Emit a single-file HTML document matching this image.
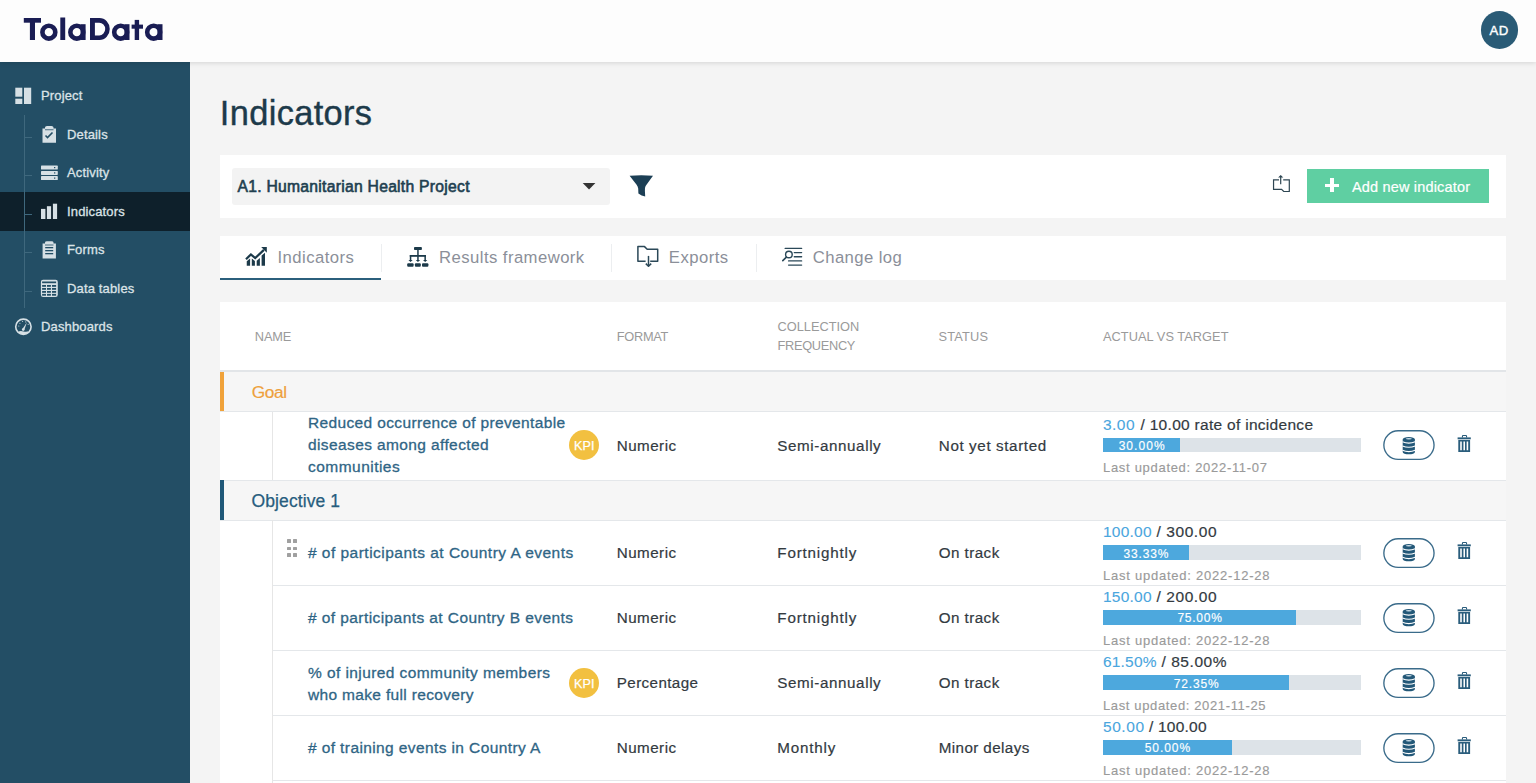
<!DOCTYPE html>
<html><head><meta charset="utf-8">
<style>
*{box-sizing:border-box;margin:0;padding:0}
html,body{width:1536px;height:783px;overflow:hidden}
body{background:#f4f4f4;font-family:"Liberation Sans",sans-serif;position:relative}
.abs{position:absolute}
#hdr{position:absolute;left:0;top:0;width:1536px;height:62px;background:#fdfdfd;box-shadow:0 1px 5px rgba(0,0,0,.13);z-index:5}
#side{position:absolute;left:0;top:62px;width:190px;height:721px;background:#234e65;z-index:4}
.nav{position:absolute;color:#dbe3e7;font-size:13px;white-space:nowrap;line-height:1;letter-spacing:0.15px;-webkit-text-stroke:0.3px #dbe3e7}
.vline{position:absolute;left:24px;top:116px;width:1px;height:190px;background:#3f687d}
.tick{position:absolute;left:24px;width:8px;height:1px;background:#3f687d}
.card{position:absolute;background:#fff}
.t{position:absolute;white-space:pre;line-height:1}
#main{position:absolute;left:0;top:0;width:1536px;height:783px}
</style></head><body>
<div id="hdr">
  <svg class="abs" style="left:0;top:0" width="180" height="62" viewBox="0 0 180 62">
    <g fill="#1a1d54">
      <rect x="23.8" y="18" width="17.2" height="4.7"/>
      <rect x="29.9" y="18" width="5.1" height="22"/>
      <circle cx="48.85" cy="32.15" r="6.45" fill="none" stroke="#1a1d54" stroke-width="4.6"/>
      <rect x="60.3" y="17.5" width="4.9" height="22.5"/>
      <circle cx="76.8" cy="32.15" r="6.45" fill="none" stroke="#1a1d54" stroke-width="4.6"/>
      <rect x="80.6" y="24.2" width="5" height="15.8"/>
      <path d="M90 18 H99.5 A10.25 11 0 0 1 99.5 40 H90 Z M94.9 22.7 V35.4 H99.2 A6 6.35 0 0 0 99.2 22.7 Z" fill-rule="evenodd"/>
      <circle cx="120.65" cy="32.15" r="6.45" fill="none" stroke="#1a1d54" stroke-width="4.6"/>
      <rect x="124.5" y="24.2" width="5" height="15.8"/>
      <rect x="134.7" y="19.9" width="4.4" height="20.1"/>
      <rect x="131.6" y="24.6" width="11.4" height="4.1"/>
      <circle cx="153.65" cy="32.15" r="6.45" fill="none" stroke="#1a1d54" stroke-width="4.6"/>
      <rect x="157.5" y="24.2" width="5" height="15.8"/>
    </g>
  </svg>
  <div class="abs" style="left:1480.5px;top:11px;width:37.5px;height:37.5px;border-radius:50%;background:#2a5b76"></div><div class="abs" style="left:1489.6px;top:24px;font-size:13.2px;line-height:1;color:#fff;letter-spacing:0.3px;-webkit-text-stroke:0.4px #fff">AD</div>
</div>

<div id="side">
  <div class="abs" style="left:0;top:130px;width:190px;height:38.5px;background:#0e202b"></div>
  <div class="vline" style="top:53px;height:193px"></div>
  <div class="tick" style="top:75px"></div>
  <div class="tick" style="top:113px"></div>
  <div class="tick" style="top:152px"></div>
  <div class="tick" style="top:190px"></div>
  <div class="tick" style="top:229px"></div>
  <svg class="abs" style="left:0;top:0" width="190" height="300" viewBox="0 62 190 300">
    <g fill="#d6e0e5">
      <!-- project -->
      <rect x="15.3" y="87.7" width="7" height="9"/>
      <rect x="15.3" y="98.7" width="7" height="5.3"/>
      <rect x="24" y="87.7" width="7.2" height="16.3"/>
      <!-- details clipboard -->
      <path d="M42.5 128.5 H45 V127.5 Q45 126 47 126 H51.5 Q53.5 126 53.5 127.5 V128.5 H56 V142.8 H42.5 Z"/>
      <path d="M45.5 135.5 L47.5 137.5 L52.5 132.5" stroke="#234e65" stroke-width="1.6" fill="none"/><rect x="45" y="129.4" width="8.5" height="0.8" fill="#234e65"/>
      <!-- activity -->
      <rect x="41" y="165.6" width="16.8" height="4" rx="0.6"/>
      <rect x="41" y="170.9" width="16.8" height="4" rx="0.6"/>
      <rect x="41" y="176.1" width="16.8" height="4" rx="0.6"/>
      <rect x="54" y="167" width="1.3" height="1.2" fill="#234e65"/>
      <rect x="54" y="172.3" width="1.3" height="1.2" fill="#234e65"/>
      <rect x="54" y="177.5" width="1.3" height="1.2" fill="#234e65"/>
      <!-- indicators bars -->
      <rect x="41" y="208.9" width="4.4" height="10.1"/>
      <rect x="46.9" y="206.2" width="4.2" height="12.8"/>
      <rect x="52.9" y="203.7" width="4.2" height="15.3"/>
      <!-- forms clipboard -->
      <path d="M42.6 243.5 H45 V242.5 Q45 241.3 47 241.3 H51.5 Q53.5 241.3 53.5 242.5 V243.5 H55.9 V258.6 H42.6 Z"/>
      <rect x="45" y="244.6" width="8.5" height="0.8" fill="#234e65"/><rect x="45.2" y="247" width="8" height="1.3" fill="#234e65"/>
      <rect x="45.2" y="250" width="8" height="1.3" fill="#234e65"/>
      <rect x="45.2" y="253" width="8" height="1.3" fill="#234e65"/>
      <!-- data tables -->
      <rect x="40.9" y="279.8" width="16.9" height="17.1" rx="2.2"/>
      <rect x="42.1" y="281.5" width="14" height="1.7" fill="#234e65"/>
      <rect x="42.1" y="285.0" width="3.9" height="1.8" fill="#234e65"/><rect x="47.0" y="285.0" width="3.9" height="1.8" fill="#234e65"/><rect x="52.0" y="285.0" width="4.1" height="1.8" fill="#234e65"/><rect x="42.1" y="288.0" width="3.9" height="1.8" fill="#234e65"/><rect x="47.0" y="288.0" width="3.9" height="1.8" fill="#234e65"/><rect x="52.0" y="288.0" width="4.1" height="1.8" fill="#234e65"/><rect x="42.1" y="291.0" width="3.9" height="1.8" fill="#234e65"/><rect x="47.0" y="291.0" width="3.9" height="1.8" fill="#234e65"/><rect x="52.0" y="291.0" width="4.1" height="1.8" fill="#234e65"/><rect x="42.1" y="293.9" width="3.9" height="1.8" fill="#234e65"/><rect x="47.0" y="293.9" width="3.9" height="1.8" fill="#234e65"/><rect x="52.0" y="293.9" width="4.1" height="1.8" fill="#234e65"/>
      <!-- dashboards gauge -->
      <circle cx="23.4" cy="326.8" r="7.7" fill="none" stroke="#d6e0e5" stroke-width="1.6"/>
      <path d="M22.2 329.3 L26.8 322.4 L24.2 330.2 Z"/>
      <circle cx="23.2" cy="329.6" r="1.3"/>
      <path d="M18.2 331.6 Q20.5 330.6 23.4 331.4 Q26.3 332.2 28.6 331.3 L28 333.2 Q23.4 335.4 18.8 333.2 Z"/>
      <circle cx="18.8" cy="326" r="0.55"/><circle cx="19.9" cy="323.2" r="0.55"/><circle cx="22.6" cy="321.5" r="0.55"/><circle cx="25.8" cy="321.9" r="0.55"/><circle cx="28.2" cy="324.3" r="0.55"/>
    </g>
  </svg>
  <div class="nav" style="left:41px;top:27.2px">Project</div>
  <div class="nav" style="left:67px;top:65.7px">Details</div>
  <div class="nav" style="left:67px;top:104.2px">Activity</div>
  <div class="nav" style="left:67px;top:142.7px">Indicators</div>
  <div class="nav" style="left:67px;top:181.2px">Forms</div>
  <div class="nav" style="left:67px;top:219.7px">Data tables</div>
  <div class="nav" style="left:41px;top:258.2px">Dashboards</div>
</div>


<div id="main"><div class="t" style="left:219.80px;top:96.00px;font-size:34.4px;color:#1d3a4a;letter-spacing:0.351px;-webkit-text-stroke:0.4px #1d3a4a;">Indicators</div><div class="t" style="left:220px;top:154.5px;width:1286px;height:63.5px;background:#fff;"></div><div class="t" style="left:232px;top:167.6px;width:378px;height:37.3px;background:#f3f3f3;border-radius:3px;"></div><div class="t" style="left:237.50px;top:179.00px;font-size:15.7px;color:#213f50;letter-spacing:0.264px;-webkit-text-stroke:0.6px #213f50;">A1. Humanitarian Health Project</div><svg class="t" style="left:580px;top:180px" width="20" height="12"><path d="M2.7 3 H15.4 L9.05 9.5 Z" fill="#333"/></svg><svg class="t" style="left:626px;top:172px" width="32" height="28" viewBox="626 172 32 28"><path d="M629.6 175.8 Q641.3 174.8 653 175.8 L645.6 186 Q644.6 188 644.9 191 L645.2 196.6 Q641.5 195.8 638.4 193.5 L638.2 188.5 Q637.8 186.5 636.6 184.8 Z" fill="#1c3f55"/></svg><svg class="t" style="left:1266px;top:166px" width="30" height="30" viewBox="0 0 30 30"><g fill="none" stroke="#2e4653" stroke-width="1.2"><path d="M13 13.8 H7.55 V23.4 H15.6 L17.7 25.5 H23.3 V13.8 H17.2"/><path d="M14.7 18.2 V10"/></g><path d="M12.1 11.6 L14.7 9 L17.3 11.6 Z" fill="#2e4653"/></svg><div class="t" style="left:1307px;top:169.2px;width:182px;height:34px;background:#5fcfa2;"></div><div class="t" style="left:1330.3px;top:178.2px;width:3.4px;height:13.8px;background:#fff;"></div><div class="t" style="left:1325px;top:184px;width:14px;height:2.8px;background:#fff;"></div><div class="t" style="left:1352.00px;top:180.00px;font-size:14.5px;color:#fff;letter-spacing:0.171px;-webkit-text-stroke:0.2px #fff;">Add new indicator</div><div class="t" style="left:220px;top:236px;width:1286px;height:44px;background:#fff;"></div><div class="t" style="left:220px;top:277.8px;width:161px;height:2.5px;background:#2b5f7c;"></div><div class="t" style="left:381px;top:244px;width:1px;height:28px;background:#eceef0;"></div><div class="t" style="left:611px;top:244px;width:1px;height:28px;background:#eceef0;"></div><div class="t" style="left:755.5px;top:244px;width:1px;height:28px;background:#eceef0;"></div><div class="t" style="left:277.50px;top:250.00px;font-size:16.7px;color:#8b8f99;letter-spacing:0.433px;">Indicators</div><div class="t" style="left:439.10px;top:250.00px;font-size:16.7px;color:#8b8f99;letter-spacing:0.433px;">Results framework</div><div class="t" style="left:668.80px;top:250.00px;font-size:16.7px;color:#8b8f99;letter-spacing:0.464px;">Exports</div><div class="t" style="left:812.80px;top:250.00px;font-size:16.7px;color:#8b8f99;letter-spacing:0.397px;">Change log</div><svg class="t" style="left:242px;top:244px" width="30" height="24" viewBox="0 0 30 24"><g fill="#1c3a4a">
<path d="M4 15.3 L8.9 10.4 L13.2 14.1 L21.9 5.9" stroke="#1c3a4a" stroke-width="2.2" fill="none" stroke-linejoin="miter"/>
<path d="M19.2 3.1 H24.8 V8.7 Z"/>
<path d="M4.75 17.3 L8.1 14.6 V21.8 H4.75 Z"/>
<path d="M9.8 14.4 L12.9 17 V21.8 H9.8 Z"/>
<path d="M14.7 16.8 L17.9 14 V21.8 H14.7 Z"/>
<path d="M19.6 11.5 L23 8.8 V21.8 H19.6 Z"/>
</g></svg><svg class="t" style="left:402px;top:244px" width="30" height="24" viewBox="0 0 30 24"><g fill="#1c3a4a">
<rect x="12" y="3.1" width="7.9" height="3" rx="0.8"/>
<rect x="15.2" y="6" width="1.5" height="10.5"/>
<rect x="7.8" y="11" width="16.1" height="1.8"/>
<rect x="7.8" y="11" width="1.5" height="5.5"/>
<rect x="22.4" y="11" width="1.5" height="5.5"/>
<path d="M6.4 15.9 H10.7 L8.55 17.9 Z M13.8 15.9 H18.1 L15.95 17.9 Z M21 15.9 H25.3 L23.15 17.9 Z"/>
<rect x="5.2" y="19.2" width="6.4" height="3.5" rx="1"/>
<rect x="12.9" y="19.2" width="5.9" height="3.5" rx="1"/>
<rect x="20" y="19.2" width="6.4" height="3.5" rx="1"/>
</g></svg><svg class="t" style="left:632px;top:242px" width="30" height="28" viewBox="0 0 30 28"><g fill="none" stroke="#2b4858" stroke-width="1.5" stroke-linejoin="round">
<path d="M13.6 19.3 H5.9 V4.6 H12.5 L15.2 7.3 H25.7 V19.3 H18.2"/>
<path d="M16.5 13.9 V24.2"/>
<path d="M13.8 21.6 L16.5 24.3 L19.2 21.6"/>
</g></svg><svg class="t" style="left:778px;top:242px" width="30" height="28" viewBox="0 0 30 28"><g fill="none" stroke="#2b4858" stroke-width="1.4" stroke-linecap="round">
<path d="M7.2 6.4 H23.6 M16.3 10.6 H23.6 M16.3 14.7 H23.6 M10.6 18.9 H23.6 M10.6 23.1 H23.6"/>
<circle cx="10.9" cy="12.5" r="3.3"/>
<path d="M8.4 15.1 L4.8 18.6" stroke-width="1.6"/>
</g></svg><div class="t" style="left:220px;top:302px;width:1286px;height:481px;background:#fff;"></div><div class="t" style="left:254.80px;top:331.00px;font-size:12.8px;color:#9a9a9a;letter-spacing:-0.161px;">NAME</div><div class="t" style="left:616.80px;top:331.00px;font-size:12.8px;color:#9a9a9a;letter-spacing:-0.298px;">FORMAT</div><div class="t" style="left:777.60px;top:321.00px;font-size:12.8px;color:#9a9a9a;letter-spacing:-0.022px;">COLLECTION</div><div class="t" style="left:777.60px;top:340.00px;font-size:12.8px;color:#9a9a9a;letter-spacing:-0.321px;">FREQUENCY</div><div class="t" style="left:938.50px;top:331.00px;font-size:12.8px;color:#9a9a9a;letter-spacing:0.181px;">STATUS</div><div class="t" style="left:1103.00px;top:331.00px;font-size:12.8px;color:#9a9a9a;letter-spacing:0.037px;">ACTUAL VS TARGET</div><div class="t" style="left:220px;top:369.5px;width:1286px;height:2px;background:#e2e5e8;"></div><div class="t" style="left:220px;top:371.5px;width:1286px;height:39.5px;background:#f6f6f6;"></div><div class="t" style="left:220px;top:371.5px;width:4px;height:39.5px;background:#f0a23a;"></div><div class="t" style="left:251.80px;top:384.00px;font-size:17.3px;color:#eea03c;letter-spacing:-0.381px;-webkit-text-stroke:0.2px #eea03c;">Goal</div><div class="t" style="left:220px;top:411px;width:1286px;height:1px;background:#e4e7ea;"></div><div class="t" style="left:272.3px;top:412px;width:1px;height:68px;background:#e6e6e6;"></div><div class="t" style="left:220px;top:480px;width:1286px;height:1px;background:#e4e7ea;"></div><div class="t" style="left:220px;top:481px;width:1286px;height:39px;background:#f6f6f6;"></div><div class="t" style="left:220px;top:480.3px;width:4px;height:40px;background:#1f5878;"></div><div class="t" style="left:251.50px;top:493.00px;font-size:17.5px;color:#275d7e;letter-spacing:0.106px;-webkit-text-stroke:0.25px #275d7e;">Objective 1</div><div class="t" style="left:220px;top:519.5px;width:1286px;height:1px;background:#e4e7ea;"></div><div class="t" style="left:272.3px;top:520px;width:1px;height:263px;background:#e6e6e6;"></div><div class="t" style="left:308.00px;top:415.00px;font-size:15.5px;color:#2f6585;letter-spacing:0.360px;-webkit-text-stroke:0.3px #2f6585;">Reduced occurrence of preventable</div><div class="t" style="left:308.00px;top:437.00px;font-size:15.5px;color:#2f6585;letter-spacing:0.388px;-webkit-text-stroke:0.3px #2f6585;">diseases among affected</div><div class="t" style="left:308.00px;top:459.00px;font-size:15.5px;color:#2f6585;letter-spacing:0.470px;-webkit-text-stroke:0.3px #2f6585;">communities</div><div class="t" style="left:569.2px;top:430.4px;width:30px;height:30px;border-radius:50%;background:#f2c040"></div><div class="t" style="left:574.00px;top:440.00px;font-size:12.6px;color:#fff;letter-spacing:0.145px;-webkit-text-stroke:0.25px #fff;">KPI</div><div class="t" style="left:616.80px;top:438.00px;font-size:15.2px;color:#333a3f;letter-spacing:0.452px;-webkit-text-stroke:0.2px #333a3f;">Numeric</div><div class="t" style="left:777.30px;top:438.00px;font-size:15.2px;color:#333a3f;letter-spacing:0.598px;-webkit-text-stroke:0.2px #333a3f;">Semi-annually</div><div class="t" style="left:938.80px;top:438.00px;font-size:15.2px;color:#333a3f;letter-spacing:0.618px;-webkit-text-stroke:0.2px #333a3f;">Not yet started</div><div class="t" style="left:1103.00px;top:417.00px;font-size:15.5px;color:#4aa6de;letter-spacing:0.444px;-webkit-text-stroke:0.1px #4aa6de;">3.00</div><div class="t" style="left:1140.50px;top:417.00px;font-size:15.5px;color:#333a3f;letter-spacing:0.294px;-webkit-text-stroke:0.2px #333a3f;">/ 10.00 rate of incidence</div><div class="t" style="left:1103px;top:437.7px;width:257.7px;height:14.6px;background:#dde3e8;"></div><div class="t" style="left:1103px;top:437.7px;width:77.3px;height:14.6px;background:#4da8dd;"></div><div class="t" style="left:1118.65px;top:440.00px;font-size:12px;color:#fff;letter-spacing:1.060px;-webkit-text-stroke:0.15px #fff;">30.00%</div><div class="t" style="left:1103.00px;top:461.00px;font-size:13px;color:#9a9a9a;letter-spacing:0.698px;-webkit-text-stroke:0.15px #9a9a9a;">Last updated: 2022-11-07</div><svg class="t" style="left:1382px;top:429.3px" width="54" height="33"><rect x="1.85" y="1.75" width="50.2" height="28.6" rx="14.3" fill="none" stroke="#3a6b8a" stroke-width="1.35"/></svg><svg class="t" style="left:1400px;top:436.55px" width="18" height="19" viewBox="0 0 18 19">
<path d="M2.7 2.3 A6.1 2.3 0 0 1 14.9 2.3 V15 A6.1 2.3 0 0 1 2.7 15 Z" fill="#235878"/>
<g fill="none" stroke="#fff" stroke-width="1.1"><path d="M2.4 4.8 Q8.8 7.4 15.2 4.8"/><path d="M2.4 9.0 Q8.8 11.6 15.2 9.0"/><path d="M2.4 13.3 Q8.8 15.9 15.2 13.3"/></g>
<ellipse cx="8.8" cy="1.75" rx="3" ry="0.75" fill="#c9dbe6"/></svg><svg class="t" style="left:1456px;top:433.4px" width="17" height="20" viewBox="0 0 17 20"><g fill="#2a5d7c">
<path d="M5.9 4.6 V3.2 Q5.9 2 7.1 2 H9.9 Q11.1 2 11.1 3.2 V4.6 H10 V3.1 H7 V4.6 Z"/>
<rect x="1.6" y="4.4" width="13.2" height="1.9"/>
<path d="M2.3 6.9 H14.1 V18.9 H2.3 Z M4.2 8.5 V17.2 H5.8 V8.5 Z M7.45 8.5 V17.2 H9 V8.5 Z M10.65 8.5 V17.2 H12.2 V8.5 Z" fill-rule="evenodd"/>
</g></svg><div class="t" style="left:308.00px;top:545.00px;font-size:15.5px;color:#2f6585;letter-spacing:0.474px;-webkit-text-stroke:0.3px #2f6585;"># of participants at Country A events</div><div class="t" style="left:616.80px;top:545.00px;font-size:15.2px;color:#333a3f;letter-spacing:0.452px;-webkit-text-stroke:0.2px #333a3f;">Numeric</div><div class="t" style="left:777.30px;top:545.00px;font-size:15.2px;color:#333a3f;letter-spacing:0.804px;-webkit-text-stroke:0.2px #333a3f;">Fortnightly</div><div class="t" style="left:938.80px;top:545.00px;font-size:15.2px;color:#333a3f;letter-spacing:0.437px;-webkit-text-stroke:0.2px #333a3f;">On track</div><div class="t" style="left:1103.00px;top:524.00px;font-size:15.5px;color:#4aa6de;letter-spacing:0.218px;-webkit-text-stroke:0.1px #4aa6de;">100.00</div><div class="t" style="left:1156.50px;top:524.00px;font-size:15.5px;color:#333a3f;letter-spacing:0.568px;-webkit-text-stroke:0.2px #333a3f;">/ 300.00</div><div class="t" style="left:1103px;top:545.2px;width:257.7px;height:14.6px;background:#dde3e8;"></div><div class="t" style="left:1103px;top:545.2px;width:85.9px;height:14.6px;background:#4da8dd;"></div><div class="t" style="left:1123.45px;top:548.00px;font-size:12px;color:#fff;letter-spacing:0.860px;-webkit-text-stroke:0.15px #fff;">33.33%</div><div class="t" style="left:1103.00px;top:569.00px;font-size:13px;color:#9a9a9a;letter-spacing:0.765px;-webkit-text-stroke:0.15px #9a9a9a;">Last updated: 2022-12-28</div><svg class="t" style="left:1382px;top:536.75px" width="54" height="33"><rect x="1.85" y="1.75" width="50.2" height="28.6" rx="14.3" fill="none" stroke="#3a6b8a" stroke-width="1.35"/></svg><svg class="t" style="left:1400px;top:544.0px" width="18" height="19" viewBox="0 0 18 19">
<path d="M2.7 2.3 A6.1 2.3 0 0 1 14.9 2.3 V15 A6.1 2.3 0 0 1 2.7 15 Z" fill="#235878"/>
<g fill="none" stroke="#fff" stroke-width="1.1"><path d="M2.4 4.8 Q8.8 7.4 15.2 4.8"/><path d="M2.4 9.0 Q8.8 11.6 15.2 9.0"/><path d="M2.4 13.3 Q8.8 15.9 15.2 13.3"/></g>
<ellipse cx="8.8" cy="1.75" rx="3" ry="0.75" fill="#c9dbe6"/></svg><svg class="t" style="left:1456px;top:540.2px" width="17" height="20" viewBox="0 0 17 20"><g fill="#2a5d7c">
<path d="M5.9 4.6 V3.2 Q5.9 2 7.1 2 H9.9 Q11.1 2 11.1 3.2 V4.6 H10 V3.1 H7 V4.6 Z"/>
<rect x="1.6" y="4.4" width="13.2" height="1.9"/>
<path d="M2.3 6.9 H14.1 V18.9 H2.3 Z M4.2 8.5 V17.2 H5.8 V8.5 Z M7.45 8.5 V17.2 H9 V8.5 Z M10.65 8.5 V17.2 H12.2 V8.5 Z" fill-rule="evenodd"/>
</g></svg><div class="t" style="left:273px;top:584.5px;width:1233px;height:1px;background:#e4e7ea;"></div><div class="t" style="left:308.00px;top:610.00px;font-size:15.5px;color:#2f6585;letter-spacing:0.421px;-webkit-text-stroke:0.3px #2f6585;"># of participants at Country B events</div><div class="t" style="left:616.80px;top:610.00px;font-size:15.2px;color:#333a3f;letter-spacing:0.452px;-webkit-text-stroke:0.2px #333a3f;">Numeric</div><div class="t" style="left:777.30px;top:610.00px;font-size:15.2px;color:#333a3f;letter-spacing:0.804px;-webkit-text-stroke:0.2px #333a3f;">Fortnightly</div><div class="t" style="left:938.80px;top:610.00px;font-size:15.2px;color:#333a3f;letter-spacing:0.437px;-webkit-text-stroke:0.2px #333a3f;">On track</div><div class="t" style="left:1103.00px;top:589.00px;font-size:15.5px;color:#4aa6de;letter-spacing:0.218px;-webkit-text-stroke:0.1px #4aa6de;">150.00</div><div class="t" style="left:1156.50px;top:589.00px;font-size:15.5px;color:#333a3f;letter-spacing:0.568px;-webkit-text-stroke:0.2px #333a3f;">/ 200.00</div><div class="t" style="left:1103px;top:610.2px;width:257.7px;height:14.6px;background:#dde3e8;"></div><div class="t" style="left:1103px;top:610.2px;width:193.3px;height:14.6px;background:#4da8dd;"></div><div class="t" style="left:1177.39px;top:612.00px;font-size:12px;color:#fff;letter-spacing:0.760px;-webkit-text-stroke:0.15px #fff;">75.00%</div><div class="t" style="left:1103.00px;top:634.00px;font-size:13px;color:#9a9a9a;letter-spacing:0.765px;-webkit-text-stroke:0.15px #9a9a9a;">Last updated: 2022-12-28</div><svg class="t" style="left:1382px;top:601.75px" width="54" height="33"><rect x="1.85" y="1.75" width="50.2" height="28.6" rx="14.3" fill="none" stroke="#3a6b8a" stroke-width="1.35"/></svg><svg class="t" style="left:1400px;top:609.0px" width="18" height="19" viewBox="0 0 18 19">
<path d="M2.7 2.3 A6.1 2.3 0 0 1 14.9 2.3 V15 A6.1 2.3 0 0 1 2.7 15 Z" fill="#235878"/>
<g fill="none" stroke="#fff" stroke-width="1.1"><path d="M2.4 4.8 Q8.8 7.4 15.2 4.8"/><path d="M2.4 9.0 Q8.8 11.6 15.2 9.0"/><path d="M2.4 13.3 Q8.8 15.9 15.2 13.3"/></g>
<ellipse cx="8.8" cy="1.75" rx="3" ry="0.75" fill="#c9dbe6"/></svg><svg class="t" style="left:1456px;top:605.2px" width="17" height="20" viewBox="0 0 17 20"><g fill="#2a5d7c">
<path d="M5.9 4.6 V3.2 Q5.9 2 7.1 2 H9.9 Q11.1 2 11.1 3.2 V4.6 H10 V3.1 H7 V4.6 Z"/>
<rect x="1.6" y="4.4" width="13.2" height="1.9"/>
<path d="M2.3 6.9 H14.1 V18.9 H2.3 Z M4.2 8.5 V17.2 H5.8 V8.5 Z M7.45 8.5 V17.2 H9 V8.5 Z M10.65 8.5 V17.2 H12.2 V8.5 Z" fill-rule="evenodd"/>
</g></svg><div class="t" style="left:273px;top:649.5px;width:1233px;height:1px;background:#e4e7ea;"></div><div class="t" style="left:308.00px;top:665.00px;font-size:15.5px;color:#2f6585;letter-spacing:0.414px;-webkit-text-stroke:0.3px #2f6585;">% of injured community members</div><div class="t" style="left:308.00px;top:687.00px;font-size:15.5px;color:#2f6585;letter-spacing:0.333px;-webkit-text-stroke:0.3px #2f6585;">who make full recovery</div><div class="t" style="left:569.1px;top:668.1px;width:30px;height:30px;border-radius:50%;background:#f2c040"></div><div class="t" style="left:573.90px;top:678.00px;font-size:12.6px;color:#fff;letter-spacing:0.145px;-webkit-text-stroke:0.25px #fff;">KPI</div><div class="t" style="left:616.80px;top:675.00px;font-size:15.2px;color:#333a3f;letter-spacing:0.384px;-webkit-text-stroke:0.2px #333a3f;">Percentage</div><div class="t" style="left:777.30px;top:675.00px;font-size:15.2px;color:#333a3f;letter-spacing:0.598px;-webkit-text-stroke:0.2px #333a3f;">Semi-annually</div><div class="t" style="left:938.80px;top:675.00px;font-size:15.2px;color:#333a3f;letter-spacing:0.437px;-webkit-text-stroke:0.2px #333a3f;">On track</div><div class="t" style="left:1103.00px;top:654.00px;font-size:15.5px;color:#4aa6de;letter-spacing:0.186px;-webkit-text-stroke:0.1px #4aa6de;">61.50%</div><div class="t" style="left:1161.50px;top:654.00px;font-size:15.5px;color:#333a3f;letter-spacing:0.545px;-webkit-text-stroke:0.2px #333a3f;">/ 85.00%</div><div class="t" style="left:1103px;top:675.2px;width:257.7px;height:14.6px;background:#dde3e8;"></div><div class="t" style="left:1103px;top:675.2px;width:186.4px;height:14.6px;background:#4da8dd;"></div><div class="t" style="left:1173.72px;top:678.00px;font-size:12px;color:#fff;letter-spacing:0.860px;-webkit-text-stroke:0.15px #fff;">72.35%</div><div class="t" style="left:1103.00px;top:699.00px;font-size:13px;color:#9a9a9a;letter-spacing:0.633px;-webkit-text-stroke:0.15px #9a9a9a;">Last updated: 2021-11-25</div><svg class="t" style="left:1382px;top:666.75px" width="54" height="33"><rect x="1.85" y="1.75" width="50.2" height="28.6" rx="14.3" fill="none" stroke="#3a6b8a" stroke-width="1.35"/></svg><svg class="t" style="left:1400px;top:674.0px" width="18" height="19" viewBox="0 0 18 19">
<path d="M2.7 2.3 A6.1 2.3 0 0 1 14.9 2.3 V15 A6.1 2.3 0 0 1 2.7 15 Z" fill="#235878"/>
<g fill="none" stroke="#fff" stroke-width="1.1"><path d="M2.4 4.8 Q8.8 7.4 15.2 4.8"/><path d="M2.4 9.0 Q8.8 11.6 15.2 9.0"/><path d="M2.4 13.3 Q8.8 15.9 15.2 13.3"/></g>
<ellipse cx="8.8" cy="1.75" rx="3" ry="0.75" fill="#c9dbe6"/></svg><svg class="t" style="left:1456px;top:670.2px" width="17" height="20" viewBox="0 0 17 20"><g fill="#2a5d7c">
<path d="M5.9 4.6 V3.2 Q5.9 2 7.1 2 H9.9 Q11.1 2 11.1 3.2 V4.6 H10 V3.1 H7 V4.6 Z"/>
<rect x="1.6" y="4.4" width="13.2" height="1.9"/>
<path d="M2.3 6.9 H14.1 V18.9 H2.3 Z M4.2 8.5 V17.2 H5.8 V8.5 Z M7.45 8.5 V17.2 H9 V8.5 Z M10.65 8.5 V17.2 H12.2 V8.5 Z" fill-rule="evenodd"/>
</g></svg><div class="t" style="left:273px;top:714.5px;width:1233px;height:1px;background:#e4e7ea;"></div><div class="t" style="left:308.00px;top:740.00px;font-size:15.5px;color:#2f6585;letter-spacing:0.393px;-webkit-text-stroke:0.3px #2f6585;"># of training events in Country A</div><div class="t" style="left:616.80px;top:740.00px;font-size:15.2px;color:#333a3f;letter-spacing:0.452px;-webkit-text-stroke:0.2px #333a3f;">Numeric</div><div class="t" style="left:777.30px;top:740.00px;font-size:15.2px;color:#333a3f;letter-spacing:0.796px;-webkit-text-stroke:0.2px #333a3f;">Monthly</div><div class="t" style="left:938.80px;top:740.00px;font-size:15.2px;color:#333a3f;letter-spacing:0.394px;-webkit-text-stroke:0.2px #333a3f;">Minor delays</div><div class="t" style="left:1103.00px;top:719.00px;font-size:15.5px;color:#4aa6de;letter-spacing:0.553px;-webkit-text-stroke:0.1px #4aa6de;">50.00</div><div class="t" style="left:1149.00px;top:719.00px;font-size:15.5px;color:#333a3f;letter-spacing:0.211px;-webkit-text-stroke:0.2px #333a3f;">/ 100.00</div><div class="t" style="left:1103px;top:740.2px;width:257.7px;height:14.6px;background:#dde3e8;"></div><div class="t" style="left:1103px;top:740.2px;width:128.8px;height:14.6px;background:#4da8dd;"></div><div class="t" style="left:1144.67px;top:742.00px;font-size:12px;color:#fff;letter-spacing:0.960px;-webkit-text-stroke:0.15px #fff;">50.00%</div><div class="t" style="left:1103.00px;top:764.00px;font-size:13px;color:#9a9a9a;letter-spacing:0.765px;-webkit-text-stroke:0.15px #9a9a9a;">Last updated: 2022-12-28</div><svg class="t" style="left:1382px;top:731.75px" width="54" height="33"><rect x="1.85" y="1.75" width="50.2" height="28.6" rx="14.3" fill="none" stroke="#3a6b8a" stroke-width="1.35"/></svg><svg class="t" style="left:1400px;top:739.0px" width="18" height="19" viewBox="0 0 18 19">
<path d="M2.7 2.3 A6.1 2.3 0 0 1 14.9 2.3 V15 A6.1 2.3 0 0 1 2.7 15 Z" fill="#235878"/>
<g fill="none" stroke="#fff" stroke-width="1.1"><path d="M2.4 4.8 Q8.8 7.4 15.2 4.8"/><path d="M2.4 9.0 Q8.8 11.6 15.2 9.0"/><path d="M2.4 13.3 Q8.8 15.9 15.2 13.3"/></g>
<ellipse cx="8.8" cy="1.75" rx="3" ry="0.75" fill="#c9dbe6"/></svg><svg class="t" style="left:1456px;top:735.2px" width="17" height="20" viewBox="0 0 17 20"><g fill="#2a5d7c">
<path d="M5.9 4.6 V3.2 Q5.9 2 7.1 2 H9.9 Q11.1 2 11.1 3.2 V4.6 H10 V3.1 H7 V4.6 Z"/>
<rect x="1.6" y="4.4" width="13.2" height="1.9"/>
<path d="M2.3 6.9 H14.1 V18.9 H2.3 Z M4.2 8.5 V17.2 H5.8 V8.5 Z M7.45 8.5 V17.2 H9 V8.5 Z M10.65 8.5 V17.2 H12.2 V8.5 Z" fill-rule="evenodd"/>
</g></svg><div class="t" style="left:273px;top:779.5px;width:1233px;height:1px;background:#e4e7ea;"></div><div class="t" style="left:287.3px;top:539.4px;width:3.6px;height:3.5px;background:#a0a0a0;border-radius:0.5px;"></div><div class="t" style="left:287.3px;top:546.7px;width:3.6px;height:3.5px;background:#a0a0a0;border-radius:0.5px;"></div><div class="t" style="left:287.3px;top:553.3px;width:3.6px;height:3.5px;background:#a0a0a0;border-radius:0.5px;"></div><div class="t" style="left:293px;top:539.4px;width:3.6px;height:3.5px;background:#a0a0a0;border-radius:0.5px;"></div><div class="t" style="left:293px;top:546.7px;width:3.6px;height:3.5px;background:#a0a0a0;border-radius:0.5px;"></div><div class="t" style="left:293px;top:553.3px;width:3.6px;height:3.5px;background:#a0a0a0;border-radius:0.5px;"></div></div>
</body></html>
